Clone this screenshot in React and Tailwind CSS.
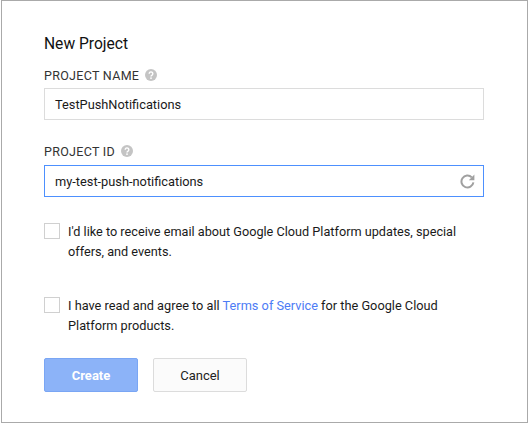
import React from "react";

function HelpIcon() {
  return (
    <svg className="w-3 h-3 ml-[6px] -mt-[3px]" viewBox="0 0 12 12">
      <circle cx="6" cy="6" r="6" fill="#c4c4c4" />
      <path d="M4.2 4.7a1.8 1.8 0 1 1 2.8 1.5c-.7.4-1 .7-1 1.4" fill="none" stroke="#fff" strokeWidth="1.4" />
      <rect x="5.2" y="8.4" width="1.6" height="1.5" fill="#fff" />
    </svg>
  );
}

function RefreshIcon() {
  return (
    <svg className="w-[15px] h-[15px]" viewBox="0 0 15 15">
      <path d="M11.8 3.4A6 6 0 1 0 13.4 8.4" fill="none" stroke="#a0a0a0" strokeWidth="2" />
      <path d="M14.4 .6v5.6H8.8z" fill="#a0a0a0" />
    </svg>
  );
}

export default function App() {
  return (
    <div className="w-[529px] h-[423px] bg-white font-['Roboto',sans-serif] text-[#1a1a1a]">
      <div className="h-[423px] w-[527px] ml-[1px] border border-[#aaaaaa] pt-[33px] pl-[42px] pr-[42px]">
        <h1 className="text-[15.6px] leading-[20px] text-[#111] mb-[12px]">New Project</h1>

        {/* Project name */}
        <div className="flex items-center text-[12.5px] leading-[20px] tracking-[0.3px] text-[#333] h-[20px] mb-[2px]">
          PROJECT NAME <HelpIcon />
        </div>
        <div className="h-[32px] w-[440px] border border-[#dcdcdc] flex items-center px-[10px] pt-[1px] text-[12.8px] mb-[22px]">
          TestPushNotifications
        </div>

        {/* Project ID */}
        <div className="flex items-center text-[12.5px] leading-[20px] tracking-[0.3px] text-[#333] h-[20px] mb-[3px]">
          PROJECT ID <HelpIcon />
        </div>
        <div className="h-[32px] w-[440px] border border-[#4d90fe] flex items-center justify-between pl-[10px] pr-[8px] pt-[1px] text-[12.8px] mb-[26px]">
          my-test-push-notifications
          <RefreshIcon />
        </div>

        {/* Agreements */}
        <div className="flex w-[440px] mb-[35px]">
          <div className="w-[16px] h-[16px] border border-[#d0d0d0] shrink-0 mr-[8px]" />
          <p className="text-[12.7px] leading-[20px] -mt-[1px]">
            I'd like to receive email about Google Cloud Platform updates, special offers, and events.
          </p>
        </div>
        <div className="flex w-[440px] mb-[22px]">
          <div className="w-[16px] h-[16px] border border-[#d0d0d0] shrink-0 mr-[8px]" />
          <p className="text-[12.75px] leading-[20px] -mt-[1px]">
            I have read and agree to all <a className="text-[#4d7cf5]">Terms of Service</a> for the Google Cloud Platform products.
          </p>
        </div>

        {/* Buttons */}
        <div className="flex gap-[15px]">
          <button className="w-[94px] h-[34px] pt-[1px] rounded-[2px] bg-[#8cb3f8] border border-[#7aa6f4] text-white text-[13px] font-bold">
            Create
          </button>
          <button className="w-[94px] h-[34px] pt-[1px] rounded-[2px] bg-[#fbfbfb] border border-[#dcdcdc] text-[#222] text-[13px]">
            Cancel
          </button>
        </div>
      </div>
    </div>
  );
}
